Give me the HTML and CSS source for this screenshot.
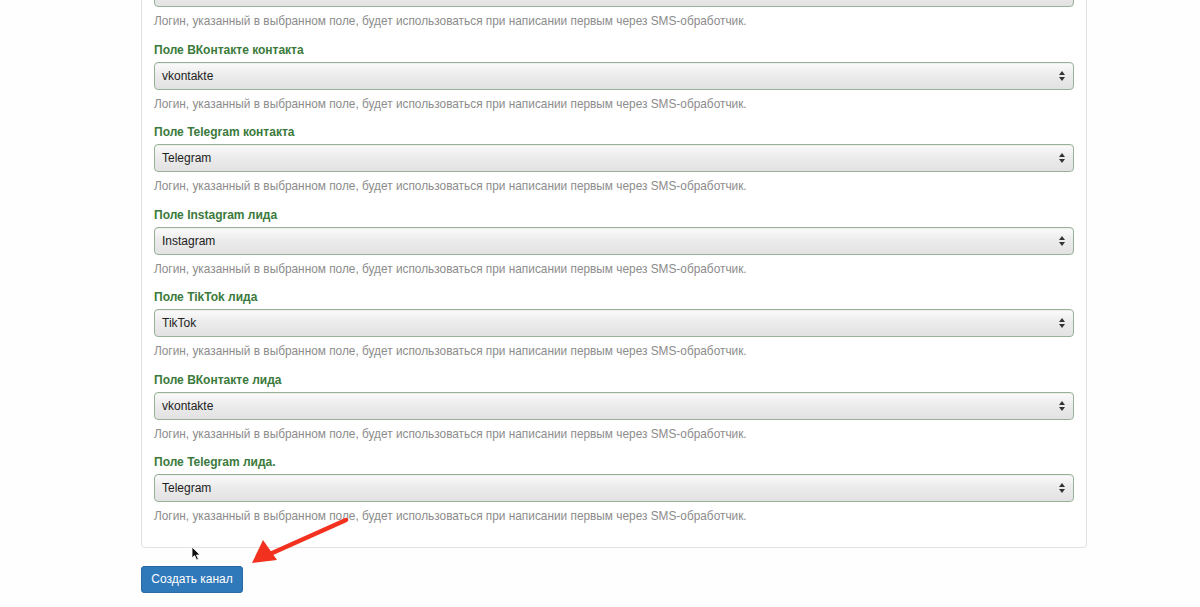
FILE: index.html
```html
<!DOCTYPE html>
<html lang="ru">
<head>
<meta charset="utf-8">
<link rel="stylesheet" href="styles.css">
</head>
<body>
<div class="page">
  <div class="panel">
    <div class="group">
      <label class="lbl">Поле TikTok контакта</label>
      <div class="select"><span>TikTok</span><i class="arr"></i></div>
      <p class="help">Логин, указанный в выбранном поле, будет использоваться при написании первым через SMS-обработчик.</p>
    </div>
    <div class="group">
      <label class="lbl">Поле ВКонтакте контакта</label>
      <div class="select"><span>vkontakte</span><i class="arr"></i></div>
      <p class="help">Логин, указанный в выбранном поле, будет использоваться при написании первым через SMS-обработчик.</p>
    </div>
    <div class="group">
      <label class="lbl">Поле Telegram контакта</label>
      <div class="select"><span>Telegram</span><i class="arr"></i></div>
      <p class="help">Логин, указанный в выбранном поле, будет использоваться при написании первым через SMS-обработчик.</p>
    </div>
    <div class="group">
      <label class="lbl">Поле Instagram лида</label>
      <div class="select"><span>Instagram</span><i class="arr"></i></div>
      <p class="help">Логин, указанный в выбранном поле, будет использоваться при написании первым через SMS-обработчик.</p>
    </div>
    <div class="group">
      <label class="lbl">Поле TikTok лида</label>
      <div class="select"><span>TikTok</span><i class="arr"></i></div>
      <p class="help">Логин, указанный в выбранном поле, будет использоваться при написании первым через SMS-обработчик.</p>
    </div>
    <div class="group">
      <label class="lbl">Поле ВКонтакте лида</label>
      <div class="select"><span>vkontakte</span><i class="arr"></i></div>
      <p class="help">Логин, указанный в выбранном поле, будет использоваться при написании первым через SMS-обработчик.</p>
    </div>
    <div class="group">
      <label class="lbl">Поле Telegram лида.</label>
      <div class="select"><span>Telegram</span><i class="arr"></i></div>
      <p class="help">Логин, указанный в выбранном поле, будет использоваться при написании первым через SMS-обработчик.</p>
    </div>
  </div>
  <button class="btn">Создать канал</button>
</div>
<svg class="arrow" width="120" height="70" viewBox="0 0 120 70">
  <line x1="96" y1="8" x2="20" y2="42" stroke="#f2321f" stroke-width="4.5" stroke-linecap="round"/>
  <polygon points="2,51 13,28 27,48" fill="#f2321f"/>
</svg>
<svg class="cursor" width="12" height="16" viewBox="0 0 12 16">
  <path d="M1 1 L1 12 L3.6 9.6 L5.6 14 L7.4 13.2 L5.5 9 L9 9 Z" fill="#111" stroke="#fff" stroke-width="0.8"/>
</svg>
</body>
</html>
```

FILE: styles.css
```css
html, body {
  margin: 0;
  padding: 0;
  background: #fefefe;
  font-family: "Liberation Sans", Arial, sans-serif;
  overflow: hidden;
}
.page {
  padding-left: 141px;
  width: 946px;
  margin-top: -59px;
}
.panel {
  border: 1px solid #e2e2e2;
  border-radius: 0 0 4px 4px;
  background: #fff;
  padding: 17px 12px 10px 12px;
}
.group {
  margin-bottom: 11.5px;
}
.lbl {
  display: block;
  font-size: 12px;
  font-weight: bold;
  line-height: 17px;
  color: #3b7a3b;
  margin-bottom: 3px;
}
.select {
  height: 28px;
  box-sizing: border-box;
  border: 1px solid #98b298;
  border-radius: 4px;
  background: linear-gradient(#fbfbfb, #ececec 45%, #e2e2e2);
  box-shadow: inset 0 1px 1px rgba(0,0,0,0.06);
  display: flex;
  align-items: center;
  justify-content: space-between;
  padding: 0 8px 0 7px;
  font-size: 12px;
  color: #222;
}
.arr {
  position: relative;
  width: 6px;
  height: 10px;
}
.arr::before, .arr::after {
  content: "";
  position: absolute;
  left: 0;
  border-left: 3px solid transparent;
  border-right: 3px solid transparent;
}
.arr::before {
  top: 0;
  border-bottom: 4px solid #333;
}
.arr::after {
  bottom: 0;
  border-top: 4px solid #333;
}
.help {
  margin: 6px 0 0 0;
  font-size: 11.85px;
  line-height: 17px;
  color: #8c8c8c;
}
.btn {
  margin-top: 18px;
  display: block;
  width: 102px;
  height: 27px;
  border: 1px solid #2a6aa5;
  border-radius: 3px;
  background: #2f78b9;
  color: #fff;
  font-family: "Liberation Sans", Arial, sans-serif;
  font-size: 12px;
  padding: 0;
}
.arrow {
  position: absolute;
  left: 250px;
  top: 512px;
}
.cursor {
  position: absolute;
  left: 191px;
  top: 546px;
}
```
